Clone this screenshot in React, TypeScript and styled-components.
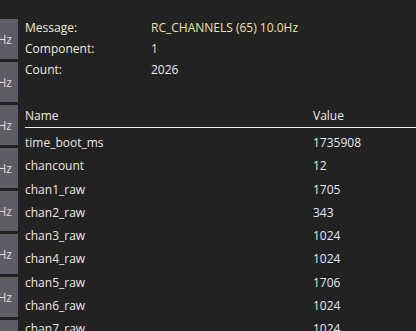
import React from "react";
import styled, { createGlobalStyle } from "styled-components";

const Global = createGlobalStyle`
  html, body {
    margin: 0;
    padding: 0;
    background: #222222;
    overflow: hidden;
  }
  body {
    font-family: "Open Sans", "Noto Sans", sans-serif;
    font-size: 12px;
    color: #e8e8e8;
  }
`;

const Page = styled.div`
  display: flex;
  width: 416px;
  height: 331px;
  overflow: hidden;
  background: #222222;
`;

const RateColumn = styled.div`
  width: 18px;
  flex: none;
  display: flex;
  flex-direction: column;
  gap: 3px;
  padding-top: 19px;
  overflow: hidden;
`;

const RateButton = styled.div`
  height: 40px;
  flex: none;
  display: flex;
  align-items: center;
  justify-content: flex-end;
  padding-right: 6px;
  background: #5e5c67;
  color: #dcdcdc;
  white-space: nowrap;
  font-size: 12px;
`;

const Main = styled.div`
  flex: 1;
  margin-left: 7px;
  padding-top: 17px;
  display: flex;
  flex-direction: column;
  min-width: 0;
`;

const InfoGrid = styled.div`
  display: grid;
  grid-template-columns: 126px 1fr;
  line-height: 21px;
`;

const InfoLabel = styled.div`
  color: #f0ead6;
`;

const InfoValue = styled.div<{ $accent?: boolean }>`
  color: ${(p) => (p.$accent ? "#ece4a8" : "#ececec")};
  white-space: nowrap;
`;

const Table = styled.div`
  margin-top: 25px;
  display: flex;
  flex-direction: column;
`;

const HeaderRow = styled.div`
  display: grid;
  grid-template-columns: 288px 1fr;
  height: 22px;
  line-height: 21px;
  border-bottom: 1px solid #f2f2f2;
  color: #ededed;
  margin-bottom: 3px;
`;

const Row = styled.div`
  display: grid;
  grid-template-columns: 288px 1fr;
  height: 23.3px;
  line-height: 23.3px;
  flex: none;
`;

const NameCell = styled.div`
  color: #ebe9e4;
`;

const ValueCell = styled.div`
  color: #e4e9f0;
`;

const rows: [string, string][] = [
  ["time_boot_ms", "1735908"],
  ["chancount", "12"],
  ["chan1_raw", "1705"],
  ["chan2_raw", "343"],
  ["chan3_raw", "1024"],
  ["chan4_raw", "1024"],
  ["chan5_raw", "1706"],
  ["chan6_raw", "1024"],
  ["chan7_raw", "1024"],
  ["chan8_raw", "1024"],
];

export default function App() {
  return (
    <>
      <Global />
      <Page>
        <RateColumn>
          {Array.from({ length: 8 }).map((_, i) => (
            <RateButton key={i}>10.0Hz</RateButton>
          ))}
        </RateColumn>
        <Main>
          <InfoGrid>
            <InfoLabel>Message:</InfoLabel>
            <InfoValue $accent>RC_CHANNELS (65) 10.0Hz</InfoValue>
            <InfoLabel>Component:</InfoLabel>
            <InfoValue $accent>1</InfoValue>
            <InfoLabel>Count:</InfoLabel>
            <InfoValue>2026</InfoValue>
          </InfoGrid>
          <Table>
            <HeaderRow>
              <div>Name</div>
              <div>Value</div>
            </HeaderRow>
            {rows.map(([n, v]) => (
              <Row key={n}>
                <NameCell>{n}</NameCell>
                <ValueCell>{v}</ValueCell>
              </Row>
            ))}
          </Table>
        </Main>
      </Page>
    </>
  );
}
